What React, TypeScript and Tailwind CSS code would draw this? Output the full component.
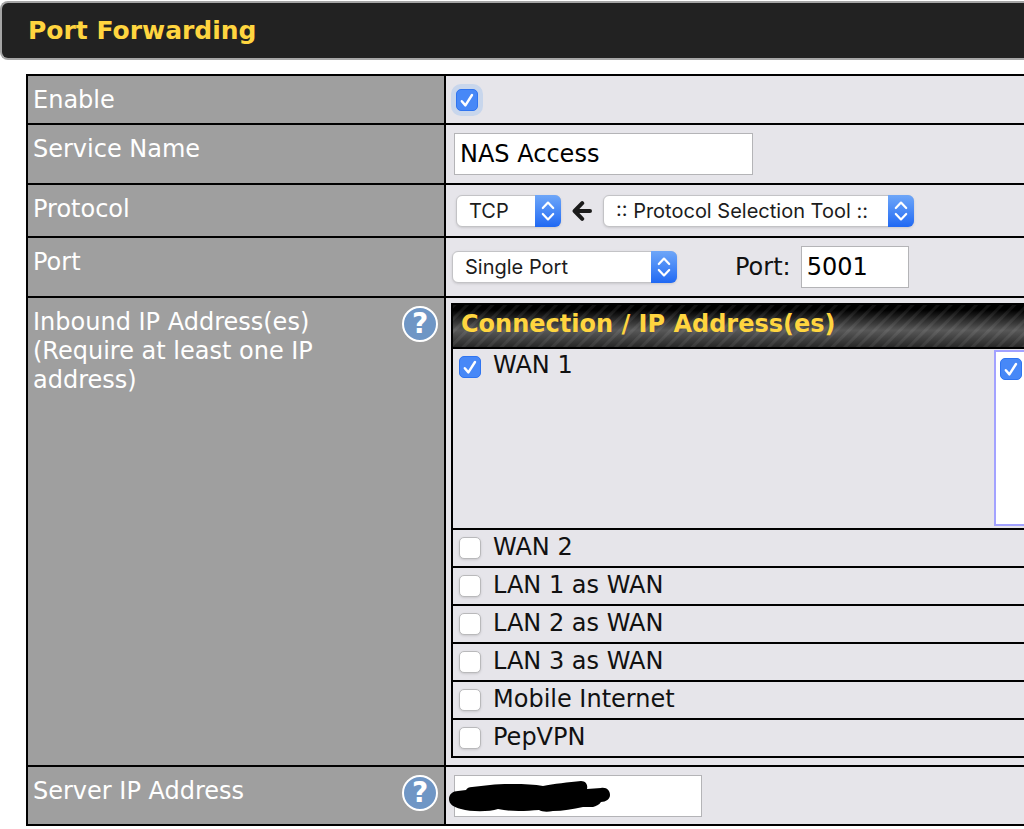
import React, { useState } from "react";

const OTHER_CONNECTIONS = [
  "WAN 2",
  "LAN 1 as WAN",
  "LAN 2 as WAN",
  "LAN 3 as WAN",
  "Mobile Internet",
  "PepVPN",
];

type CheckboxProps = {
  id?: string;
  label?: string;
  defaultChecked?: boolean;
  highlighted?: boolean;
};

function Checkbox({ id, label, defaultChecked, highlighted }: CheckboxProps) {
  return (
    <span className="relative inline-block h-[22px] w-[22px] shrink-0">
      <input
        id={id}
        type="checkbox"
        aria-label={label}
        defaultChecked={defaultChecked}
        className={`peer block h-[22px] w-[22px] appearance-none rounded-[5px] border border-[#b9b9bb] bg-white shadow-sm checked:border-[#2f74f0] checked:bg-[#4788f7] checked:shadow-none ${
          highlighted ? "ring-[5px] ring-[#c8d6ec]" : ""
        }`}
      />
      <svg
        viewBox="0 0 22 22"
        className="pointer-events-none absolute inset-0 hidden h-full w-full peer-checked:block"
        fill="none"
        stroke="white"
        strokeWidth="2.4"
        strokeLinecap="round"
        strokeLinejoin="round"
      >
        <path d="M5.8 12.2 L9.4 16.4 L16 6" />
      </svg>
    </span>
  );
}

type SelectProps = {
  id: string;
  label: string;
  options: string[];
  className: string;
};

function Select({ id, label, options, className }: SelectProps) {
  return (
    <span className={`relative inline-block h-8 ${className}`}>
      <select
        id={id}
        aria-label={label}
        className="block h-8 w-full appearance-none rounded-md border border-[#c3c3c6] bg-white pl-3 font-[Inter,sans-serif] text-xl leading-7 text-[#1c1c1c] shadow-sm"
      >
        {options.map((option) => (
          <option key={option}>{option}</option>
        ))}
      </select>
      <span className="pointer-events-none absolute inset-y-0 right-0 w-[26px] rounded-r-md bg-linear-to-b from-[#6ea6f8] to-[#1f68f3]">
        <svg
          viewBox="0 0 26 32"
          className="h-full w-full"
          fill="none"
          stroke="white"
          strokeWidth="2.2"
          strokeLinecap="round"
          strokeLinejoin="round"
        >
          <path d="M7.8 13 L13 7.6 L18.2 13 M7.8 19 L13 24.4 L18.2 19" />
        </svg>
      </span>
    </span>
  );
}

function HelpButton() {
  return (
    <button
      type="button"
      aria-label="Help"
      className="mr-1.5 h-9 w-9 shrink-0 rounded-full border-2 border-white bg-[#6f96c5] text-center text-[28px] leading-8 font-bold text-white"
    >
      ?
    </button>
  );
}

type RowProps = {
  label: React.ReactNode;
  htmlFor?: string;
  help?: boolean;
  className: string;
  children: React.ReactNode;
};

function Row({ label, htmlFor, help, className, children }: RowProps) {
  return (
    <div className="flex border-t-2 border-black">
      <div className="flex w-[418px] shrink-0 items-start justify-between border-r-2 border-black bg-[#9f9f9f] pt-2 pl-[5px] text-white">
        <label htmlFor={htmlFor} className="pt-0.5">
          {label}
        </label>
        {help && <HelpButton />}
      </div>
      <div className={`flex min-w-0 flex-1 bg-[#e6e5ea] ${className}`}>
        {children}
      </div>
    </div>
  );
}

export default function App() {
  const [serviceName, setServiceName] = useState("NAS Access");
  const [port, setPort] = useState("5001");
  const [serverIp, setServerIp] = useState("");

  const inputStyle =
    "h-[42px] border border-[#b4b4b7] bg-white px-[5px] text-2xl text-black";

  return (
    <div className="overflow-hidden bg-white font-[Verdana,'DejaVu_Sans',sans-serif] text-2xl leading-[29px] text-[#111]">
      <header className="mt-px flex h-[59px] items-center rounded-l-lg border-2 border-r-0 border-[#a6a6a6] bg-[#222] pl-[26px]">
        <h1 className="text-[25px] font-bold text-[#ffd53f]">
          Port Forwarding
        </h1>
      </header>

      <form className="mt-3.5 ml-[26px] border-b-2 border-l-2 border-black">
        <Row label="Enable" htmlFor="enable" className="h-[47px] items-center pl-2.5">
          <Checkbox id="enable" defaultChecked highlighted />
        </Row>

        <Row label="Service Name" htmlFor="service" className="h-[58px] items-center pl-2">
          <input
            id="service"
            type="text"
            value={serviceName}
            onChange={(e) => setServiceName(e.target.value)}
            className={`${inputStyle} w-[299px]`}
          />
        </Row>

        <Row label="Protocol" htmlFor="protocol" className="h-[51px] items-center pl-2.5">
          <Select
            id="protocol"
            label="Protocol"
            options={["TCP", "UDP"]}
            className="w-[105px]"
          />
          <svg
            viewBox="0 0 20 20"
            className="mx-[11px] h-5 w-5"
            fill="none"
            stroke="#1b1b1b"
            strokeWidth="4"
            strokeLinecap="round"
            strokeLinejoin="round"
          >
            <path d="M10.2 2.2 L2.6 10 L10.2 17.8 M3.5 10 H18" />
          </svg>
          <Select
            id="tool"
            label="Protocol Selection Tool"
            options={[":: Protocol Selection Tool ::"]}
            className="w-[311px]"
          />
        </Row>

        <Row label="Port" htmlFor="port-type" className="h-[58px] items-center pl-1.5">
          <Select
            id="port-type"
            label="Port type"
            options={["Single Port", "Port Range"]}
            className="w-[225px]"
          />
          <label htmlFor="port" className="mr-2.5 ml-[58px]">
            Port:
          </label>
          <input
            id="port"
            type="text"
            value={port}
            onChange={(e) => setPort(e.target.value)}
            className={`${inputStyle} w-[108px]`}
          />
        </Row>

        {/* Inbound addresses */}
        <Row
          label={
            <>
              Inbound IP Address(es)
              <br />
              (Require at least one IP
              <br />
              address)
            </>
          }
          help
          className="pt-[5px] pb-[7px] pl-[5px]"
        >
          <table className="w-full border-collapse border-2 border-r-0 border-black">
            <thead>
              <tr>
                <th
                  colSpan={2}
                  className="h-11 bg-[repeating-linear-gradient(135deg,rgba(255,255,255,0.07)_0px,rgba(255,255,255,0.07)_2px,transparent_3px,transparent_8px,rgba(255,255,255,0.07)_9px),linear-gradient(to_bottom,#000_12%,#585858_60%,#282828_100%)] pb-1 pl-2 text-left font-bold text-[#ffd53f]"
                >
                  Connection / IP Address(es)
                </th>
              </tr>
            </thead>
            <tbody>
              <tr className="h-[181px] border-t-2 border-black align-top">
                <td className="w-[542px] pt-0.5 pl-1.5">
                  <div className="flex items-center gap-3">
                    <Checkbox id="WAN 1" defaultChecked />
                    <label htmlFor="WAN 1" className="pb-0.5">
                      WAN 1
                    </label>
                  </div>
                </td>
                <td className="pt-px">
                  <div className="h-44 overflow-hidden border-2 border-r-0 border-[#a2a2ff] bg-white pt-1.5 pl-1">
                    <Checkbox label="Interface IP" defaultChecked />
                  </div>
                </td>
              </tr>
              {OTHER_CONNECTIONS.map((name) => (
                <tr key={name} className="h-[38px] border-t-2 border-black">
                  <td colSpan={2} className="pl-1.5">
                    <div className="flex items-center gap-3">
                      <Checkbox id={name} />
                      <label htmlFor={name} className="pb-0.5">
                        {name}
                      </label>
                    </div>
                  </td>
                </tr>
              ))}
            </tbody>
          </table>
        </Row>

        <Row label="Server IP Address" htmlFor="server" help className="h-[57px] items-center pl-2">
          <div className="relative">
            <input
              id="server"
              type="text"
              value={serverIp}
              onChange={(e) => setServerIp(e.target.value)}
              className={`${inputStyle} block w-[248px]`}
            />
            {/* Address is blacked out */}
            <svg
              viewBox="0 0 162 32"
              className="pointer-events-none absolute top-1.5 -left-[5px] h-8 w-[162px]"
            >
              <path
                d="M0 18 C0 13 4 10 9 10 L17 9 C18 7 20 6 23 6 L41 4 C56 2.500 80 2.500 94 5 C104 3 120 1 132 0 C137 0 139 4 138 8 L152 7 C158 6 161 10 161 14 C161 18 157 21 152 21 C150 24 147 25 144 26 L134 26 C124 28 114 30 104 30 C99 31 93 31 90 29 C77 30 62 31 49 28 C40 31 22 31 12 28 C4 26 0 23 0 18 Z"
                fill="#000"
              />
            </svg>
          </div>
        </Row>
      </form>
    </div>
  );
}
